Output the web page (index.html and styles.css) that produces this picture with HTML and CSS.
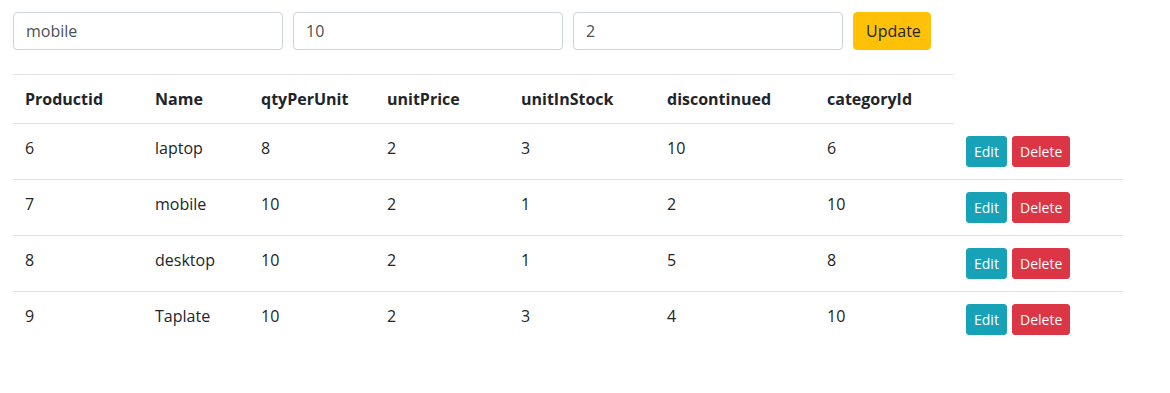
FILE: index.html
```html
<!DOCTYPE html>
<html lang="en">
<head>
  <meta charset="UTF-8" />
  <title>Products</title>
  <link rel="stylesheet" href="styles.css">
</head>
<body>
  <div class="container">
    <form class="edit-form">
      <input type="text" class="form-control" value="mobile" />
      <input type="text" class="form-control" value="10" />
      <input type="text" class="form-control" value="2" />
      <button type="button" class="btn btn-warning">Update</button>
    </form>

    <table class="table">
      <colgroup>
        <col class="col-id">
        <col class="col-name">
        <col class="col-qty">
        <col class="col-price">
        <col class="col-stock">
        <col class="col-disc">
        <col class="col-cat">
        <col>
      </colgroup>
      <thead>
        <tr>
          <th>Productid</th>
          <th>Name</th>
          <th>qtyPerUnit</th>
          <th>unitPrice</th>
          <th>unitInStock</th>
          <th>discontinued</th>
          <th>categoryId</th>
        </tr>
      </thead>
      <tbody>
        <tr>
          <td>6</td><td>laptop</td><td>8</td><td>2</td><td>3</td><td>10</td><td>6</td>
          <td><button class="btn btn-sm btn-info">Edit</button> <button class="btn btn-sm btn-danger">Delete</button></td>
        </tr>
        <tr>
          <td>7</td><td>mobile</td><td>10</td><td>2</td><td>1</td><td>2</td><td>10</td>
          <td><button class="btn btn-sm btn-info">Edit</button> <button class="btn btn-sm btn-danger">Delete</button></td>
        </tr>
        <tr>
          <td>8</td><td>desktop</td><td>10</td><td>2</td><td>1</td><td>5</td><td>8</td>
          <td><button class="btn btn-sm btn-info">Edit</button> <button class="btn btn-sm btn-danger">Delete</button></td>
        </tr>
        <tr>
          <td>9</td><td>Taplate</td><td>10</td><td>2</td><td>3</td><td>4</td><td>10</td>
          <td><button class="btn btn-sm btn-info">Edit</button> <button class="btn btn-sm btn-danger">Delete</button></td>
        </tr>
      </tbody>
    </table>
  </div>
</body>
</html>
```

FILE: styles.css
```css
/* Base */
* {
  box-sizing: border-box;
}

body {
  margin: 0;
  font-family: "Open Sans", "Noto Sans", sans-serif;
  font-size: 16px;
  line-height: 1.5;
  color: #212529;
  background: #fff;
}

.container {
  padding: 12px 13px;
  width: 1136px;
}

/* Form */
.edit-form {
  display: flex;
  gap: 10px;
  margin-bottom: 24px;
}

.form-control {
  width: 270px;
  height: 38px;
  padding: 6px 12px;
  font: inherit;
  color: #495057;
  border: 1px solid #ced4da;
  border-radius: 4px;
  background: #fff;
}

.btn {
  display: inline-block;
  font: inherit;
  line-height: 1.5;
  padding: 6px 12px;
  border: 1px solid transparent;
  border-radius: 4px;
  cursor: pointer;
}

.btn-warning {
  width: 78px;
  height: 38px;
  background: #ffc107;
  border-color: #ffc107;
  color: #212529;
}

.btn-sm {
  font-size: 14px;
  padding: 4px 7px;
  border-radius: 3px;
  height: 31px;
}

.btn-info {
  background: #17a2b8;
  border-color: #17a2b8;
  color: #fff;
}

.btn-danger {
  background: #dc3545;
  border-color: #dc3545;
  color: #fff;
  margin-left: 1px;
}

/* Table */
.table {
  width: 1110px;
  table-layout: fixed;
  border-collapse: collapse;
}

.col-id { width: 130px; }
.col-name { width: 106px; }
.col-qty { width: 126px; }
.col-price { width: 134px; }
.col-stock { width: 146px; }
.col-disc { width: 160px; }
.col-cat { width: 139px; }

.table th,
.table td {
  padding: 12px;
  text-align: left;
  vertical-align: top;
  border-top: 1px solid #dee2e6;
}

.table thead th {
  font-weight: 700;
  vertical-align: bottom;
  border-bottom: 1px solid #dee2e6;
}

.table tbody tr:first-child td {
  border-top: none;
}
```
